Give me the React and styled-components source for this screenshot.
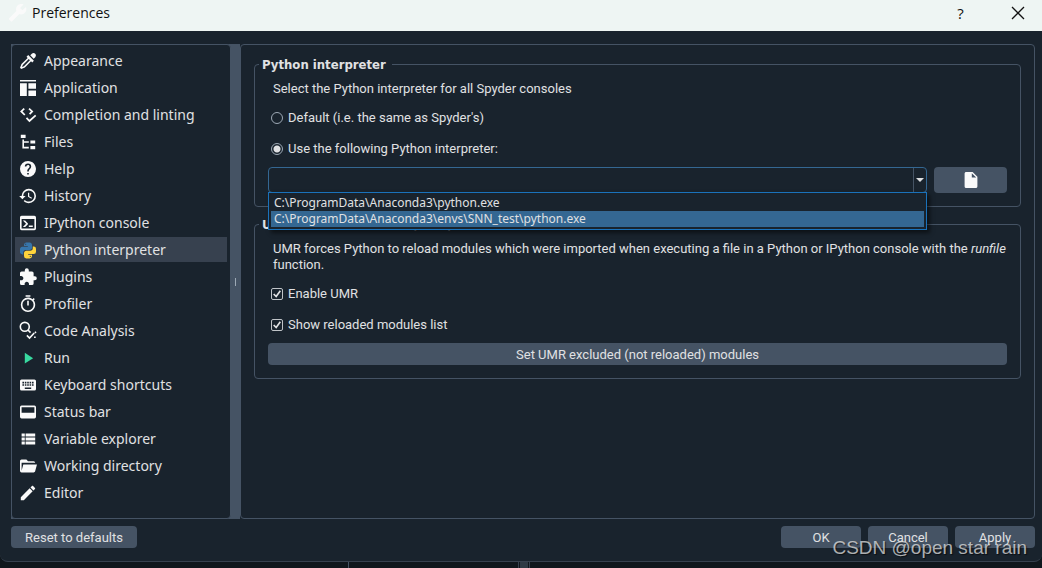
import React, { useState } from 'react';
import styled, { createGlobalStyle } from 'styled-components';

const GlobalStyle = createGlobalStyle`
    *{
        box-sizing: border-box;
    }
    html, body, #root{
        height: 100%;
    }
    body{
        margin: 0;
        background: #10171d;
        color: #e0e1e3;
        font-family: Roboto, 'DejaVu Sans', sans-serif;
        font-size: 13px;
        line-height: 16px;
        overflow: hidden;
    }
    button, select, input{
        font: inherit;
        color: inherit;
        margin: 0;
    }
`;

const shapes = {
    eyedropper: <path d="M19.35,11.72L17.22,13.85L15.81,12.43L8.1,20.14L3.5,22L2,20.5L3.86,15.9L11.57,8.19L10.15,6.78L12.28,4.65L19.35,11.72M16.76,3C17.93,1.83 19.83,1.83 21,3C22.17,4.17 22.17,6.07 21,7.24L19.08,9.16L14.84,4.92L16.76,3M5.56,17.03L4.5,19.5L6.97,18.44L14.4,11L13,9.6L5.56,17.03Z" />,
    layout: <path d="M2,2H22V4H2ZM2,6H10.5V22H2ZM12.5,6H22V13H12.5ZM12.5,15H22V22H12.5Z" />,
    completion: (
        <g fill="none" stroke="currentColor" strokeWidth="2.2">
            <path d="M7.3,3.9L3.6,7.6L8,12" />
            <path d="M13.3,3.9L17.2,7.6L14,10.8" />
            <path d="M10.1,15.5L13.8,19.5L21.6,12.4" />
        </g>
    ),
    tree: <path d="M3,3H9V7H3V3M15,10H21V14H15V10M15,17H21V21H15V17M13,13H7V18H13V20H7L5,20V9H7V11H13V13Z" />,
    help: <path d="M15.07,11.25L14.17,12.17C13.45,12.89 13,13.5 13,15H11V14.5C11,13.39 11.45,12.39 12.17,11.67L13.41,10.41C13.78,10.05 14,9.55 14,9C14,7.89 13.1,7 12,7A2,2 0 0,0 10,9H8A4,4 0 0,1 12,5A4,4 0 0,1 16,9C16,9.88 15.64,10.67 15.07,11.25M13,19H11V17H13M12,2A10,10 0 0,0 2,12A10,10 0 0,0 12,22A10,10 0 0,0 22,12C22,6.47 17.5,2 12,2Z" />,
    history: <path d="M13.5,8H12V13L16.28,15.54L17,14.33L13.5,12.25V8M13,3A9,9 0 0,0 4,12H1L4.96,16.03L9,12H6A7,7 0 0,1 13,5A7,7 0 0,1 20,12A7,7 0 0,1 13,19C11.07,19 9.32,18.21 8.06,16.94L6.64,18.36C8.27,20 10.5,21 13,21A9,9 0 0,0 22,12A9,9 0 0,0 13,3" />,
    console: <path d="M20,19V7H4V19H20M20,3A2,2 0 0,1 22,5V19A2,2 0 0,1 20,21H4A2,2 0 0,1 2,19V5C2,3.89 2.9,3 4,3H20M13,17V15H18V17H13M9.58,13L5.57,9H8.4L11.7,12.3C12.09,12.69 12.09,13.33 11.7,13.72L8.42,17H5.59L9.58,13Z" />,
    python: (
        <>
            <path fill="#ffd43b" d="M19.14,7.5A2.86,2.86 0 0,1 22,10.36V14.14A2.86,2.86 0 0,1 19.14,17H12C12,17.39 12.32,17.96 12.71,17.96H17V19.64A2.86,2.86 0 0,1 14.14,22.5H9.86A2.86,2.86 0 0,1 7,19.64V15.89C7,14.31 8.28,13.04 9.86,13.04H15.11C16.69,13.04 17.96,11.76 17.96,10.18V7.5H19.14M14.86,19.29C14.46,19.29 14.14,19.59 14.14,20.18C14.14,20.77 14.46,20.89 14.86,20.89A0.71,0.71 0 0,0 15.57,20.18C15.57,19.59 15.25,19.29 14.86,19.29" />
            <path fill="#3776ab" d="M4.86,17.5C3.28,17.5 2,16.22 2,14.64V10.86C2,9.28 3.28,8 4.86,8H12C12,7.61 11.68,7.04 11.29,7.04H7V5.36C7,3.78 8.28,2.5 9.86,2.5H14.14C15.72,2.5 17,3.78 17,5.36V9.11C17,10.69 15.72,11.96 14.14,11.96H8.89C7.31,11.96 6.04,13.24 6.04,14.82V17.5H4.86M9.14,5.71C9.54,5.71 9.86,5.41 9.86,4.82C9.86,4.23 9.54,4.11 9.14,4.11C8.75,4.11 8.43,4.23 8.43,4.82C8.43,5.41 8.75,5.71 9.14,5.71Z" />
        </>
    ),
    puzzle: <path d="M20.5,11H19V7C19,5.89 18.1,5 17,5H13V3.5A2.5,2.5 0 0,0 10.5,1A2.5,2.5 0 0,0 8,3.5V5H4A2,2 0 0,0 2,7V10.8H3.5C5,10.8 6.2,12 6.2,13.5C6.2,15 5,16.2 3.5,16.2H2V20A2,2 0 0,0 4,22H7.8V20.5C7.8,19 9,17.8 10.5,17.8C12,17.8 13.2,19 13.2,20.5V22H17A2,2 0 0,0 19,20V16H20.5A2.5,2.5 0 0,0 23,13.5A2.5,2.5 0 0,0 20.5,11Z" />,
    timer: <path d="M12,20A7,7 0 0,1 5,13A7,7 0 0,1 12,6A7,7 0 0,1 19,13A7,7 0 0,1 12,20M19.03,7.39L20.45,5.97C20,5.46 19.55,5 19.04,4.56L17.62,6C16.07,4.74 14.12,4 12,4A9,9 0 0,0 3,13A9,9 0 0,0 12,22C17,22 21,17.97 21,13C21,10.88 20.26,8.93 19.03,7.39M11,14H13V8H11M15,1H9V3H15V1Z" />,
    analysis: (
        <g fill="none" stroke="currentColor" strokeWidth="2">
            <circle cx="8" cy="6.8" r="5.6" />
            <path d="M12,10.8L15.2,14" />
            <path d="M10.6,17.4L13.9,20.8L19.8,14.4" />
            <path d="M19.6,19.8H21.6M20.6,14.4L22,13" />
        </g>
    ),
    play: <path fill="#38d9a0" d="M8,5.5V19L18.4,12.2Z" />,
    keyboard: <path d="M19,10H17V8H19M19,13H17V11H19M16,10H14V8H16M16,13H14V11H16M16,17H8V15H16M7,10H5V8H7M7,13H5V11H7M8,11H10V13H8M8,8H10V10H8M11,11H13V13H11M11,8H13V10H11M20,5H4C2.89,5 2,5.89 2,7V17A2,2 0 0,0 4,19H20A2,2 0 0,0 22,17V7C22,5.89 21.1,5 20,5Z" />,
    dock: <path d="M20 4H4A2 2 0 0 0 2 6V18A2 2 0 0 0 4 20H20A2 2 0 0 0 22 18V6A2 2 0 0 0 20 4M20 13H4V6H20V13" />,
    list: <path d="M9,5V9H21V5M9,19H21V15H9M9,14H21V10H9M4,9H8V5H4M4,19H8V15H4M4,14H8V10H4V14Z" />,
    folder: <path d="M19,20H4C2.89,20 2,19.1 2,18V6C2,4.89 2.89,4 4,4H10L12,6H19A2,2 0 0,1 21,8H21L4,8V18L6.14,10H23.21L20.93,18.5C20.7,19.37 19.92,20 19,20Z" />,
    pencil: <path d="M20.71,7.04C21.1,6.65 21.1,6 20.71,5.63L18.37,3.29C18,2.9 17.35,2.9 16.96,3.29L15.12,5.12L18.87,8.87M3,17.25V21H6.75L17.81,9.93L14.06,6.18L3,17.25Z" />,
    file: <path d="M13,9V3.5L18.5,9M6,2C4.89,2 4,2.89 4,4V20A2,2 0 0,0 6,22H18A2,2 0 0,0 20,20V8L14,2H6Z" />,
    wrench: <path d="M2.2,18.6L11.2,9.6C10.3,7.3 10.8,4.6 12.7,2.7C14.7,0.7 17.7,0.3 20.1,1.4L15.8,5.7L18.8,8.7L23.2,4.4C24.3,6.8 23.8,9.8 21.8,11.8C19.9,13.7 17.2,14.2 14.9,13.3L5.9,22.3C5.4,22.8 4.7,22.8 4.3,22.3L2.2,20.2C1.7,19.7 1.7,19 2.2,18.6Z" />,
};

const Icon = ({ name }) => (
    <Glyph viewBox="-0.5 -0.5 25 25" aria-hidden="true">{shapes[name]}</Glyph>
);

const pages = [
    ['eyedropper', 'Appearance'],
    ['layout', 'Application'],
    ['completion', 'Completion and linting'],
    ['tree', 'Files'],
    ['help', 'Help'],
    ['history', 'History'],
    ['console', 'IPython console'],
    ['python', 'Python interpreter'],
    ['puzzle', 'Plugins'],
    ['timer', 'Profiler'],
    ['analysis', 'Code Analysis'],
    ['play', 'Run'],
    ['keyboard', 'Keyboard shortcuts'],
    ['dock', 'Status bar'],
    ['list', 'Variable explorer'],
    ['folder', 'Working directory'],
    ['pencil', 'Editor'],
];

const interpreters = [
    'C:\\ProgramData\\Anaconda3\\python.exe',
    'C:\\ProgramData\\Anaconda3\\envs\\SNN_test\\python.exe',
];

const App = () => {

    const [page, setPage] = useState('Python interpreter');
    const [hovered, setHovered] = useState(interpreters[1]);

    return (
        <Screen>
            <GlobalStyle />
            <TitleBar>
                <Icon name="wrench" />
                <Title>Preferences</Title>
                <WindowButton aria-label="Help">?</WindowButton>
                <WindowButton aria-label="Close">
                    <svg width="14" height="14" viewBox="0 0 14 14" aria-hidden="true">
                        <path d="M1,1L13,13M13,1L1,13" stroke="#111" strokeWidth="1.3" />
                    </svg>
                </WindowButton>
            </TitleBar>
            <Dialog>
                <Content>
                    <Rail>
                        <Sidebar>
                            {pages.map(([icon, label]) => (
                                <PageButton key={label} $active={label === page} onClick={() => setPage(label)}>
                                    <Icon name={icon} />
                                    <span>{label}</span>
                                </PageButton>
                            ))}
                        </Sidebar>
                        <Splitter><Grip /></Splitter>
                    </Rail>
                    <Panel>
                        <Group>
                            <legend>Python interpreter</legend>
                            <Text>Select the Python interpreter for all Spyder consoles</Text>
                            <Option>
                                <Radio name="interpreter" />
                                Default (i.e. the same as Spyder's)
                            </Option>
                            <Option>
                                <Radio name="interpreter" defaultChecked />
                                Use the following Python interpreter:
                            </Option>
                            <PathRow>
                                <Combo>
                                    <Select aria-label="Python interpreter path" defaultValue="">
                                        <option value="" />
                                        {interpreters.map((path) => <option key={path}>{path}</option>)}
                                    </Select>
                                    <Arrow><ArrowHead /></Arrow>
                                    <Popup role="listbox" aria-label="Recent interpreters">
                                        {interpreters.map((path) => (
                                            <PopupItem
                                                key={path}
                                                role="option"
                                                aria-selected={path === hovered}
                                                $active={path === hovered}
                                                onMouseEnter={() => setHovered(path)}
                                            >
                                                {path}
                                            </PopupItem>
                                        ))}
                                    </Popup>
                                </Combo>
                                <BrowseButton aria-label="Select file"><Icon name="file" /></BrowseButton>
                            </PathRow>
                        </Group>
                        <Group>
                            <legend>User Module Reloader (UMR)</legend>
                            <Text>
                                UMR forces Python to reload modules which were imported when executing a file in a Python or IPython console with the <i>runfile</i> function.
                            </Text>
                            <Option>
                                <Check defaultChecked />
                                Enable UMR
                            </Option>
                            <Option>
                                <Check defaultChecked />
                                Show reloaded modules list
                            </Option>
                            <WideButton>Set UMR excluded (not reloaded) modules</WideButton>
                        </Group>
                    </Panel>
                </Content>
                <Footer>
                    <ResetButton>Reset to defaults</ResetButton>
                    <Actions>
                        <ActionButton>OK</ActionButton>
                        <ActionButton>Cancel</ActionButton>
                        <ActionButton>Apply</ActionButton>
                    </Actions>
                </Footer>
            </Dialog>
            <Backdrop>
                <BackdropPane />
                <BackdropPane />
                <BackdropHandle />
            </Backdrop>
            <Watermark>CSDN @open star rain</Watermark>
        </Screen>
    );
}

const Screen = styled.div`
    display: flex;
    flex-direction: column;
    height: 100%;
    position: relative;
`

const Glyph = styled.svg`
    width: 20px;
    height: 20px;
    flex: none;
    color: #fafafa;
    fill: currentColor;
`

const TitleBar = styled.header`
    display: flex;
    align-items: center;
    flex: none;
    height: 31px;
    padding: 0 1px 6px 7px;
    background: #eef5f3;
`

const Title = styled.h1`
    flex: 1;
    margin: 0;
    padding-left: 5px;
    color: #111;
    font: 400 14px/20px 'Open Sans', sans-serif;
`

const WindowButton = styled.button`
    display: flex;
    align-items: center;
    justify-content: center;
    width: 57px;
    height: 24px;
    padding: 0 0 0 10px;
    border: 0;
    background: none;
    color: #111;
    font: 400 15px/20px 'Open Sans', sans-serif;
`

const Dialog = styled.main`
    display: flex;
    flex-direction: column;
    flex: 1;
    min-height: 0;
    padding: 13px 7px 13px 11px;
    background: #19232d;
    border-bottom: 1px solid #37414f;
    border-radius: 0 0 8px 8px;
`

const Content = styled.div`
    display: flex;
    flex: 1;
    min-height: 0;
`

const Rail = styled.div`
    display: flex;
    background: #455364;
`

const Sidebar = styled.nav`
    display: flex;
    flex-direction: column;
    gap: 2px;
    width: 220px;
    padding: 3px;
    border: 1px solid #455364;
    border-radius: 4px;
    background: #19232d;
`

const PageButton = styled.button`
    display: flex;
    align-items: center;
    gap: 6px;
    flex: none;
    height: 25px;
    padding: 0 3px;
    border: 0;
    background: ${(props) => (props.$active ? '#37414f' : 'none')};
    font: 400 14px/20px 'Noto Sans', sans-serif;
    text-align: left;
`

const Splitter = styled.div`
    display: flex;
    align-items: center;
    justify-content: center;
    width: 9px;
`

const Grip = styled.div`
    width: 1px;
    height: 8px;
    background: #9da9b5;
`

const Panel = styled.section`
    display: flex;
    flex-direction: column;
    gap: 9px;
    flex: 1;
    min-width: 0;
    padding: 11px 13px;
    border: 1px solid #455364;
    border-radius: 4px;
`

const Group = styled.fieldset`
    display: flex;
    flex-direction: column;
    min-width: 0;
    margin: 0;
    padding: 9px 13px 13px;
    border: 1px solid #455364;
    border-radius: 4px;

    legend{
        margin-left: -9px;
        padding: 2px 6px 0 3px;
        font: bold 13px/14px 'DejaVu Sans Condensed', 'DejaVu Sans', sans-serif;
        font-stretch: condensed;
    }
`

const Text = styled.p`
    margin: 0 0 13px;
    padding: 0 0 0 5px;
`

const Option = styled.label`
    display: flex;
    align-items: center;
    gap: 4px;
    height: 16px;
    margin-bottom: 15px;
    padding-left: 2px;
`

const Radio = styled.input.attrs({ type: 'radio' })`
    appearance: none;
    width: 12px;
    height: 12px;
    margin: 0 1px;
    border: 1px solid #9da9b5;
    border-radius: 50%;

    &:checked{
        background: radial-gradient(circle, #e0e1e3 0 3px, transparent 4px);
    }
`

const tick = "url(\"data:image/svg+xml,%3Csvg xmlns='http://www.w3.org/2000/svg' viewBox='0 0 12 12'%3E%3Cpath d='M2 6l3 3 5-7' fill='none' stroke='%23e0e1e3' stroke-width='2'/%3E%3C/svg%3E\")";

const Check = styled.input.attrs({ type: 'checkbox' })`
    appearance: none;
    width: 12px;
    height: 12px;
    margin: 0 1px;
    border: 1px solid #c0c4c8;
    border-radius: 2px;

    &:checked{
        background: ${tick} center / 10px 10px no-repeat;
    }
`

const PathRow = styled.div`
    display: flex;
    gap: 7px;
    height: 26px;
    margin-top: -5px;
`

const Combo = styled.div`
    display: flex;
    flex: 1;
    position: relative;
`

const Select = styled.select`
    appearance: none;
    flex: 1;
    padding: 0 20px 0 6px;
    border: 1px solid #346792;
    border-radius: 4px;
    background: #19232d;
    outline: none;
`

const Arrow = styled.span`
    position: absolute;
    top: 1px;
    right: 1px;
    bottom: 1px;
    display: flex;
    align-items: center;
    justify-content: center;
    width: 13px;
    border-left: 1px solid #455364;
    pointer-events: none;
`

const ArrowHead = styled.span`
    border: 4px solid transparent;
    border-top-color: #e0e1e3;
    border-bottom-width: 0;
`

const Popup = styled.ul`
    position: absolute;
    z-index: 1;
    top: 25px;
    left: 0;
    right: 0;
    margin: 0;
    padding: 2px;
    border: 1px solid #1a72bb;
    background: #19232d;
    box-shadow: 3px 3px 4px rgba(0, 0, 0, 0.5);
    list-style: none;
`

const PopupItem = styled.li`
    padding: 0 3px;
    background: ${(props) => (props.$active ? '#346792' : 'none')};
    font: 400 12px/16px 'Noto Sans', sans-serif;
`

const Button = styled.button`
    height: 22px;
    padding: 2px 0 0;
    border: 0;
    border-radius: 4px;
    background: #455364;
`

const BrowseButton = styled(Button)`
    display: flex;
    align-items: center;
    justify-content: center;
    width: 73px;
    height: 26px;
    padding: 0;
`

const WideButton = styled(Button)`
    margin-top: -5px;
`

const ResetButton = styled(Button)`
    width: 126px;
`

const ActionButton = styled(Button)`
    width: 80px;
`

const Footer = styled.footer`
    display: flex;
    justify-content: space-between;
    flex: none;
    padding-top: 7px;
`

const Actions = styled.div`
    display: flex;
    gap: 7px;
`

const Backdrop = styled.div`
    display: flex;
    flex: none;
    height: 6px;
`

const BackdropPane = styled.div`
    width: 349px;
    border-right: 1px solid #455364;

    & + &{
        width: 169px;
        border: 0;
    }
`

const BackdropHandle = styled.div`
    width: 12px;
    padding: 0 1px;
    border: solid #37414f;
    border-width: 0 1px;
    background: #2f3a45 content-box;
`

const Watermark = styled.div`
    position: absolute;
    right: 15px;
    bottom: 8px;
    color: rgba(225, 225, 225, 0.75);
    font: 400 19px/24px 'Liberation Sans', sans-serif;
    text-shadow: 1px 1px 1px rgba(0, 0, 0, 0.6);
    pointer-events: none;
`

export default App;
